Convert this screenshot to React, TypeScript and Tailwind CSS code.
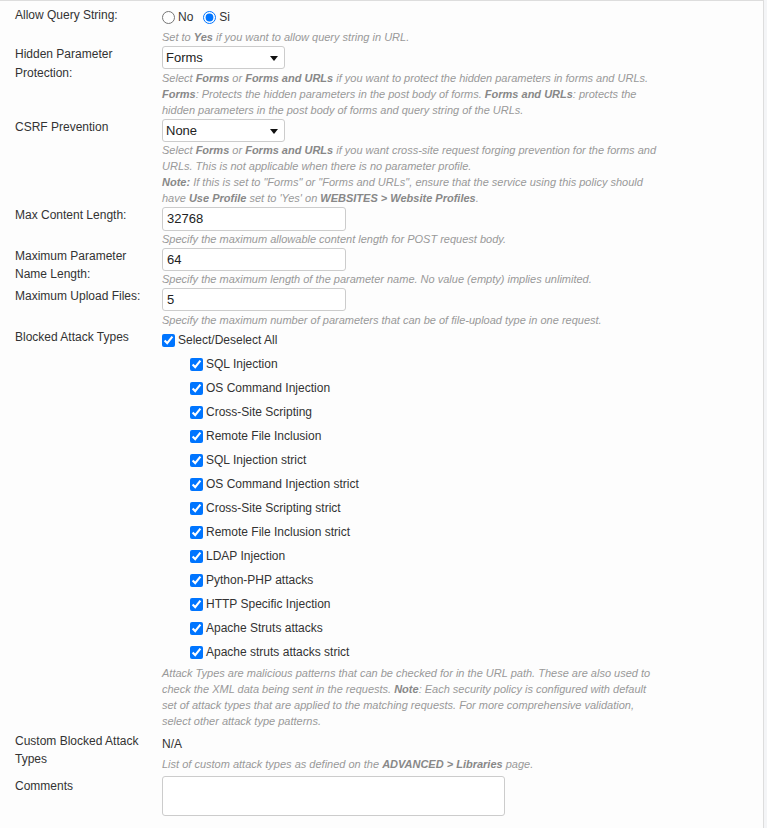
import React from "react";

const font = { fontFamily: '"Liberation Sans", Arial, sans-serif' };

function Help({ children }: { children: React.ReactNode }) {
  return (
    <div className="text-[11px] leading-[16px] italic text-[#999] max-w-[500px]">{children}</div>
  );
}

function B({ children }: { children: React.ReactNode }) {
  return <b className="font-bold text-[#888]">{children}</b>;
}

function Row({
  label,
  children,
  className = "",
  labelPad = "pt-[1px]",
}: {
  label: React.ReactNode;
  children: React.ReactNode;
  className?: string;
  labelPad?: string;
}) {
  return (
    <div className={"flex " + className}>
      <div className={"w-[147px] shrink-0 text-[12px] leading-[18px] text-[#333] pr-2 " + labelPad}>{label}</div>
      <div className="flex-1 pt-[2px]">{children}</div>
    </div>
  );
}

function Select({ value }: { value: string }) {
  return (
    <div className="relative w-[123px] h-[23px] border border-[#ccc] rounded-[3px] bg-white flex items-center pl-[3px] text-[13px] text-[#222]">
      {value}
      <span className="absolute right-[6px] top-[9px] w-0 h-0 border-l-[4px] border-r-[4px] border-t-[5px] border-l-transparent border-r-transparent border-t-[#111]" />
    </div>
  );
}

function TextInput({ value, h = "h-[24px]" }: { value: string; h?: string }) {
  return (
    <div className={"w-[184px] border border-[#ccc] rounded-[3px] bg-white flex items-center pl-[4px] text-[13px] text-[#222] " + h}>
      {value}
    </div>
  );
}

function Check({ label, indent }: { label: string; indent?: boolean }) {
  return (
    <label className={"flex items-center h-[24px] text-[12px] text-[#333] " + (indent ? "pl-[28px]" : "")}>
      <input type="checkbox" defaultChecked className="w-[13px] h-[13px] m-0 mr-[3px]" />
      {label}
    </label>
  );
}

const attacks = [
  "SQL Injection",
  "OS Command Injection",
  "Cross-Site Scripting",
  "Remote File Inclusion",
  "SQL Injection strict",
  "OS Command Injection strict",
  "Cross-Site Scripting strict",
  "Remote File Inclusion strict",
  "LDAP Injection",
  "Python-PHP attacks",
  "HTTP Specific Injection",
  "Apache Struts attacks",
  "Apache struts attacks strict",
];

export default function App() {
  return (
    <div className="w-[767px] h-[828px] overflow-hidden bg-[#f4f5f7] flex" style={font}>
      <div className="w-[764px] h-full bg-[#fdfdfd] border-t border-r border-[#ddd] pl-[15px] pt-[5px]">
        <Row label="Allow Query String:" labelPad="pt-0">
          <div className="flex items-center h-[22px] -mt-[2px] text-[12px] text-[#333]">
            <label className="flex items-center">
              <input type="radio" name="qs" className="w-[13px] h-[13px] m-0 mr-[3px]" />
              No
            </label>
            <label className="flex items-center ml-[10px]">
              <input type="radio" name="qs" defaultChecked className="w-[13px] h-[13px] m-0 mr-[3px]" />
              Si
            </label>
          </div>
          <div className="pt-[1px]">
            <Help>
              Set to <B>Yes</B> if you want to allow query string in URL.
            </Help>
          </div>
        </Row>
        <Row label={<div className="leading-[19px]">Hidden Parameter Protection:</div>} className="-mt-[1px]">
          <Select value="Forms" />
          <div className="pt-[1px]">
            <Help>
              Select <B>Forms</B> or <B>Forms and URLs</B> if you want to protect the hidden parameters in forms and URLs.{" "}
              <B>Forms</B>: Protects the hidden parameters in the post body of forms. <B>Forms and URLs</B>: protects the
              hidden parameters in the post body of forms and query string of the URLs.
            </Help>
          </div>
        </Row>
        <Row label="CSRF Prevention" className="-mt-[1px]">
          <Select value="None" />
          <Help>
            Select <B>Forms</B> or <B>Forms and URLs</B> if you want cross-site request forging prevention for the forms and
            URLs. This is not applicable when there is no parameter profile.
            <br />
            <B>Note:</B> If this is set to "Forms" or "Forms and URLs", ensure that the service using this policy should
            have <B>Use Profile</B> set to 'Yes' on <B>WEBSITES &gt; Website Profiles</B>.
          </Help>
        </Row>
        <Row label="Max Content Length:" className="-mt-[1px]">
          <TextInput value="32768" />
          <Help>Specify the maximum allowable content length for POST request body.</Help>
        </Row>
        <Row label="Maximum Parameter Name Length:" className="-mt-[1px]">
          <TextInput value="64" h="h-[23px]" />
          <Help>Specify the maximum length of the parameter name. No value (empty) implies unlimited.</Help>
        </Row>
        <Row label="Maximum Upload Files:" className="-mt-[1px]">
          <TextInput value="5" h="h-[23px]" />
          <div className="pt-[1px]">
            <Help>Specify the maximum number of parameters that can be of file-upload type in one request.</Help>
          </div>
        </Row>
        <Row label="Blocked Attack Types" className="-mt-[1px]">
          <div className="-mt-[1px]">
            <Check label="Select/Deselect All" />
            {attacks.map((a) => (
              <Check key={a} label={a} indent />
            ))}
          </div>
          <div className="pt-[1px]">
            <Help>
              Attack Types are malicious patterns that can be checked for in the URL path. These are also used to check the
              XML data being sent in the requests. <B>Note</B>: Each security policy is configured with default set of attack
              types that are applied to the matching requests. For more comprehensive validation, select other attack type
              patterns.
            </Help>
          </div>
        </Row>
        <Row label="Custom Blocked Attack Types" className="mt-[2px]">
          <div className="text-[12px] leading-[16px] text-[#333] pt-[3px]">N/A</div>
          <div className="pt-[4px]">
            <Help>
              List of custom attack types as defined on the <B>ADVANCED &gt; Libraries</B> page.
            </Help>
          </div>
        </Row>
        <Row label="Comments" className="mt-[4px]">
          <div className="w-[343px] h-[40px] border border-[#ccc] rounded-[3px] bg-white -mt-[2px]" />
        </Row>
      </div>
    </div>
  );
}
